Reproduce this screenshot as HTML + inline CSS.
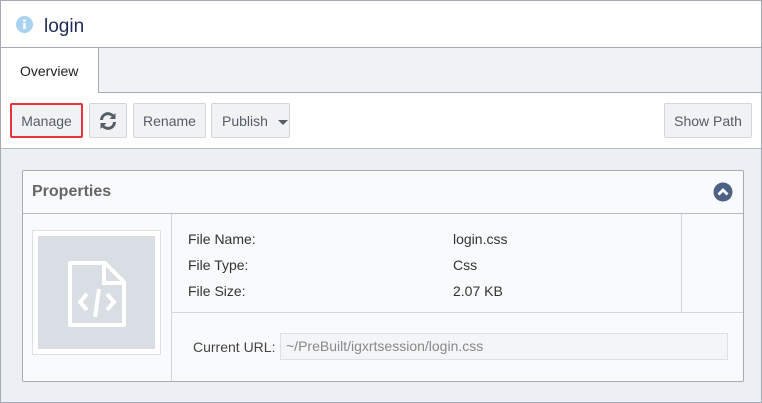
<!DOCTYPE html>
<html><head><style>
*{box-sizing:border-box;margin:0;padding:0}
body{width:762px;height:403px;overflow:hidden;font-family:"Liberation Sans",sans-serif;background:#fff;position:relative}
.a{position:absolute}
.btn{position:absolute;top:103px;height:35px;background:#f0f2f4;border:1px solid #d3d7dc;border-radius:2px;color:#555d66;font-size:14px;line-height:35px;text-align:center}
.t{position:absolute;font-size:14px;color:#333}
</style></head><body>
<div class="a" style="left:0;top:0;width:762px;height:403px;border:1px solid #a4aab1"></div>
<svg class="a" style="left:16px;top:16px" width="17" height="17"><circle cx="8.5" cy="8.5" r="8.5" fill="#a9d3f1"/><rect x="7.2" y="7" width="2.6" height="6" fill="#fff"/><circle cx="8.5" cy="4.6" r="1.4" fill="#fff"/></svg>
<div class="a" style="left:44px;top:16px;font-size:19px;color:#1e2b56">login</div>
<div class="a" style="left:1px;top:47px;width:760px;height:46px;background:#f0f2f5;border-top:1px solid #a4aab1;border-bottom:1px solid #a4aab1"></div>
<div class="a" style="left:1px;top:47px;width:98px;height:46px;background:#fff;border-top:1px solid #a4aab1;border-right:1px solid #a4aab1"></div>
<div class="a" style="left:20px;top:63px;font-size:14px;color:#222">Overview</div>
<div class="a" style="left:1px;top:148px;width:760px;height:254px;background:#eceff3;border-top:1px solid #b5bbc2"></div>
<div class="btn" style="left:10px;width:73px;border:2px solid #e8343a;line-height:33px">Manage</div>
<div class="btn" style="left:89px;width:38px"><svg width="20" height="20" viewBox="0 0 20 20" style="margin-top:7px"><path d="M3.5 9A6.5 6.5 0 0 1 15 5" stroke="#555d66" stroke-width="3" fill="none"/><path d="M17.5 2v6h-6z" fill="#555d66"/><path d="M16.5 11A6.5 6.5 0 0 1 5 15" stroke="#555d66" stroke-width="3" fill="none"/><path d="M2.5 18v-6h6z" fill="#555d66"/></svg></div>
<div class="btn" style="left:133px;width:73px">Rename</div>
<div class="btn" style="left:211px;width:79px;text-align:left;padding-left:10px">Publish<span style="position:absolute;left:66px;top:16px;border:5px solid transparent;border-top:5px solid #555d66;border-bottom:0"></span></div>
<div class="btn" style="left:664px;width:88px">Show Path</div>
<div class="a" style="left:22px;top:170px;width:722px;height:212px;background:#f9fafb;border:1px solid #a5acb4;border-radius:2px"></div>
<div class="a" style="left:32px;top:183px;font-size:16px;font-weight:bold;color:#666">Properties</div>
<svg class="a" style="left:713px;top:182px" width="20" height="20"><circle cx="10" cy="10" r="9.5" fill="#4c6185"/><path d="M5.5 12.5 10 8l4.5 4.5" stroke="#fff" stroke-width="2.8" fill="none"/></svg>
<div class="a" style="left:23px;top:213px;width:720px;height:1px;background:#b5bbc2"></div>
<div class="a" style="left:171px;top:214px;width:1px;height:167px;background:#d4d8de"></div>
<div class="a" style="left:681px;top:214px;width:1px;height:98px;background:#d4d8de"></div>
<div class="a" style="left:172px;top:312px;width:571px;height:1px;background:#d4d8de"></div>
<div class="a" style="left:32px;top:230px;width:129px;height:125px;border:1px solid #dde1e6;background:#fff"></div>
<div class="a" style="left:38px;top:236px;width:117px;height:113px;background:#d9dde4"></div>
<svg class="a" style="left:68px;top:261px" width="58" height="66" viewBox="0 0 58 66"><path d="M2 2h35l19 19v43H2z" stroke="#fff" stroke-width="4" fill="none" stroke-linejoin="round"/><path d="M36 3v19h19" stroke="#fff" stroke-width="4" fill="none"/><path d="M19 33l-7 8 7 8M39 33l7 8-7 8M31 28l-4 28" stroke="#fff" stroke-width="4" fill="none"/></svg>
<div class="t" style="left:188px;top:231px">File Name:</div>
<div class="t" style="left:188px;top:257px">File Type:</div>
<div class="t" style="left:188px;top:283px">File Size:</div>
<div class="t" style="left:453px;top:231px">login.css</div>
<div class="t" style="left:453px;top:257px">Css</div>
<div class="t" style="left:453px;top:283px">2.07 KB</div>
<div class="t" style="left:193px;top:339px;color:#444">Current URL:</div>
<div class="a" style="left:280px;top:333px;width:448px;height:27px;background:#f4f5f7;border:1px solid #dde0e4;font-size:14px;color:#888;line-height:25px;padding-left:5px">~/PreBuilt/igxrtsession/login.css</div>
</body></html>
